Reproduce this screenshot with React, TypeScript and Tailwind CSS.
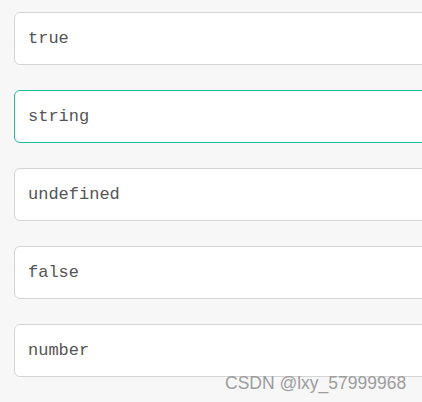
const values = ["true", "string", "undefined", "false", "number"];

export default function App() {
  return (
    <div className="w-[422px] h-[402px] overflow-hidden bg-[#f7f7f7] relative">
      <div className="flex flex-col gap-[25px] pt-[12px] pl-[14px]">
        {values.map((v) => (
          <div
            key={v}
            className={
              v === "string"
                ? "w-[430px] h-[53px] shrink-0 flex items-center pl-[13px] bg-white rounded-[6px] border border-[#1abc9c]"
                : "w-[430px] h-[53px] shrink-0 flex items-center pl-[13px] bg-white rounded-[6px] border border-[#d4d4d4]"
            }
          >
            <span className="font-['Courier_New','Liberation_Mono',monospace] text-[17px] text-[#555]">{v}</span>
          </div>
        ))}
      </div>
      <div className="absolute left-[225px] top-[373px] font-['Liberation_Sans',Arial,sans-serif] text-[17.5px] text-[#9d9d9d] leading-[20px]">
        CSDN @lxy_57999968
      </div>
    </div>
  );
}
